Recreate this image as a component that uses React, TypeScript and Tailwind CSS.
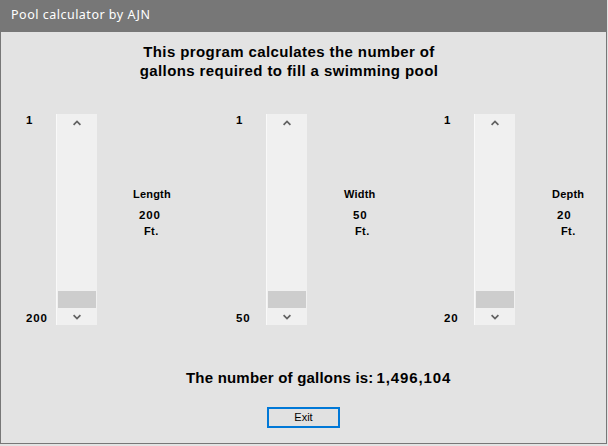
import React from "react";

function Chevron({ down }: { down?: boolean }) {
  return (
    <svg width="8" height="6" viewBox="0 0 8 6" className="block">
      <path
        d={down ? "M0.6 1.2 L4 4.6 L7.4 1.2" : "M0.6 4.8 L4 1.4 L7.4 4.8"}
        fill="none"
        stroke="#606060"
        strokeWidth="1.7"
      />
    </svg>
  );
}

function ScrollBar() {
  return (
    <div className="flex h-[211px] w-[41px] flex-col bg-[#f0f0f0] border-l border-[#f9f9f9]">
      <div className="flex h-[17px] items-center justify-center pt-[1px]">
        <Chevron />
      </div>
      <div className="flex-1" />
      <div className="mx-[1px] h-[17px] bg-[#cdcdcd]" />
      <div className="flex h-[17px] items-center justify-center">
        <Chevron down />
      </div>
    </div>
  );
}

type ColProps = {
  width: string;
  max: string;
  name: string;
  value: string;
  nameMl: string;
  valueMl: string;
  unitMl: string;
};

function Column({ width, max, name, value, nameMl, valueMl, unitMl }: ColProps) {
  return (
    <div className={`flex ${width}`}>
      <div className="flex h-[211px] w-[55px] flex-col justify-between pl-[25px] text-[11.5px] font-bold leading-[13px] tracking-[0.8px]">
        <div>1</div>
        <div>{max}</div>
      </div>
      <ScrollBar />
      <div className="flex flex-col pt-[74px] text-[11px] font-bold leading-[13px]">
        <div className={`tracking-[0.2px] ${nameMl}`}>{name}</div>
        <div className={`mt-[8px] tracking-[0.9px] text-[11.5px] ${valueMl}`}>{value}</div>
        <div className={`mt-[3px] tracking-[0.4px] ${unitMl}`}>Ft.</div>
      </div>
    </div>
  );
}

export default function App() {
  return (
    <div
      className="h-[446px] w-[608px] bg-[#e3e3e3] text-black"
      style={{ fontFamily: '"Liberation Sans", Arial, sans-serif' }}
    >
      <div className="flex h-[444px] w-[607px] flex-col">
        <div
          className="flex h-[32px] items-center bg-[#777777] pl-[11px] pb-[1px] text-[12.5px] tracking-[0.5px] text-white"
          style={{ fontFamily: '"Noto Sans", "Open Sans", sans-serif' }}
        >
          Pool calculator by AJN
        </div>
        <div className="flex flex-1 flex-col border-x border-b border-[#777777] bg-[#e3e3e3]">
          <div className="ml-[108px] w-[360px] pt-[10px] text-center text-[15px] font-bold leading-[19px] tracking-[0.4px]">
            This program calculates the number of
            <br />
            gallons required to fill a swimming pool
          </div>
          <div className="mt-[34px] flex">
            <Column
              width="w-[210px]"
              max="200"
              name="Length"
              value="200"
              nameMl="ml-[36px]"
              valueMl="ml-[42px]"
              unitMl="ml-[47px]"
            />
            <Column
              width="w-[208px]"
              max="50"
              name="Width"
              value="50"
              nameMl="ml-[37px]"
              valueMl="ml-[46px]"
              unitMl="ml-[48px]"
            />
            <Column
              width="w-[186px]"
              max="20"
              name="Depth"
              value="20"
              nameMl="ml-[37px]"
              valueMl="ml-[42px]"
              unitMl="ml-[46px]"
            />
          </div>
          <div className="ml-[185px] mt-[44px] flex text-[15px] font-bold leading-[18px]">
            <span className="tracking-[0.2px]">The number of gallons is:</span>
            <span className="ml-[3px] tracking-[0.9px]">1,496,104</span>
          </div>
          <button className="ml-[266px] mt-[20px] flex h-[21px] w-[73px] items-center justify-center border-2 border-[#0078d7] bg-[#e1e1e1] text-[11px] leading-none">
            Exit
          </button>
        </div>
      </div>
    </div>
  );
}
